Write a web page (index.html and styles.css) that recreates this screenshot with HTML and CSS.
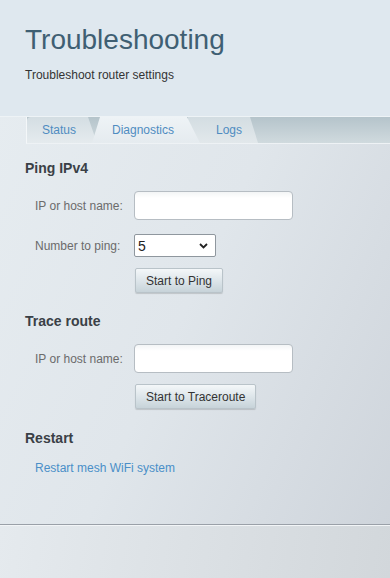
FILE: index.html
```html
<!DOCTYPE html>
<html>
<head>
    <title>Troubleshooting</title>
    <link rel="stylesheet" href="styles.css">
</head>
<body>
    <div id="header">
        <h1>Troubleshooting</h1>
        <p>Troubleshoot router settings</p>
    </div>
    <div id="tabs">
        <div class="tab tab-status">Status</div>
        <div class="tab tab-diag active">Diagnostics</div>
        <div class="tab tab-logs">Logs</div>
    </div>
    <div id="content">
        <h2>Ping IPv4</h2>
        <div class="form">
            <label>IP or host name:</label>
            <input type="text" class="field">
            <label>Number to ping:</label>
            <div class="select-wrap">
                <select class="count">
                    <option>5</option>
                    <option>10</option>
                    <option>15</option>
                </select>
                <svg class="chevron" width="9" height="6" viewBox="0 0 9 6">
                    <path d="M1 1 L4.5 4.5 L8 1" fill="none" stroke="#222" stroke-width="1.8"/>
                </svg>
            </div>
            <span></span>
            <div><button>Start to Ping</button></div>
        </div>

        <h2 class="next">Trace route</h2>
        <div class="form">
            <label>IP or host name:</label>
            <input type="text" class="field">
            <span></span>
            <div><button>Start to Traceroute</button></div>
        </div>

        <h2 class="next last">Restart</h2>
        <a href="#" class="link">Restart mesh WiFi system</a>
    </div>
    <div id="footer"></div>
</body>
</html>
```

FILE: styles.css
```css
html, body {
    height: 100%;
}

body {
    margin: 0;
    display: flex;
    flex-direction: column;
    font-family: "Liberation Sans", Arial, sans-serif;
    font-size: 12px;
    color: #333;
    background: linear-gradient(115deg, #e7edf1 0%, #e0e6eb 50%, #cdd3da 100%);
}

#header {
    background: #dfe8ef;
    padding: 25px 25px 0;
    height: 91px;
    border-bottom: 1px solid #eef3f6;
}

#header h1 {
    margin: 0;
    font-size: 28px;
    font-weight: normal;
    line-height: 30px;
    color: #3f5f73;
}

#header p {
    margin: 13px 0 0;
    font-size: 12px;
    color: #333;
}

#tabs {
    display: flex;
    height: 26px;
    margin-left: 26px;
    border-left: 1px solid #f4f7f9;
    border-bottom: 1px solid #eef2f5;
    background: linear-gradient(#b5c4cb, #d0dade);
}

.tab {
    height: 26px;
    line-height: 26px;
    color: #4f8cc1;
    text-align: center;
    box-sizing: border-box;
}

.tab-status {
    width: 70px;
    padding-right: 6px;
    border-radius: 4px 0 0 0;
    background: linear-gradient(#d4dee3, #e5ebee);
    clip-path: polygon(0 0, 61px 0, 70px 100%, 0 100%);
}

.tab-diag {
    width: 108px;
    margin-left: -5px;
    padding-right: 6px;
    background: linear-gradient(#eef3f6, #e5ebef);
    clip-path: polygon(8px 0, 95px 0, 108px 100%, 0 100%);
    position: relative;
    z-index: 2;
}

.tab-logs {
    width: 70px;
    margin-left: -12px;
    padding-left: 12px;
    background: linear-gradient(#d3dde2, #e2e8eb);
    clip-path: polygon(0 0, 62px 0, 70px 100%, 0 100%);
}

#content {
    flex: 1;
    padding: 16px 0 0 25px;
    border-bottom: 1px solid #9aa0a8;
}

h2 {
    margin: 0;
    font-size: 14px;
    line-height: 16px;
    color: #3a4046;
}

h2.next {
    margin-top: 20px;
}

h2.last {
    margin-top: 21px;
}

.form {
    display: grid;
    grid-template-columns: 99px auto;
    align-items: center;
    justify-content: start;
    row-gap: 14px;
    margin: 15px 0 0 10px;
}

.form label {
    color: #6b6b6b;
}

.field {
    width: 159px;
    height: 29px;
    box-sizing: border-box;
    border: 1px solid #b6bdc3;
    border-radius: 4px;
    background: linear-gradient(#f3f5f6, #fff 6px);
    outline: none;
}

.select-wrap {
    position: relative;
    width: 82px;
}

.count {
    appearance: none;
    width: 82px;
    height: 23px;
    box-sizing: border-box;
    border: 1px solid #8f979e;
    border-radius: 2px;
    background: #fff;
    padding: 0 0 0 3px;
    font-family: "Liberation Sans", Arial, sans-serif;
    font-size: 14px;
    color: #222;
}

.chevron {
    position: absolute;
    right: 8px;
    top: 9px;
    pointer-events: none;
}

button {
    height: 25px;
    padding: 0 10px;
    margin-left: 1px;
    border: 1px solid #b9c3c9;
    border-radius: 2px;
    background: linear-gradient(#f4f7f9, #d9e2e7 60%, #c7d3d9);
    box-shadow: 0 1px 1px rgba(0, 0, 0, 0.15);
    font-family: "Liberation Sans", Arial, sans-serif;
    font-size: 12px;
    color: #333;
    cursor: pointer;
}

.form button {
    margin-top: -3px;
}

.link {
    display: block;
    margin: 15px 0 0 10px;
    color: #4a8fc8;
    text-decoration: none;
}

#footer {
    height: 52px;
    border-top: 1px solid #f2f5f7;
    background: linear-gradient(100deg, #e5eaee, #d2d7db);
}
```
